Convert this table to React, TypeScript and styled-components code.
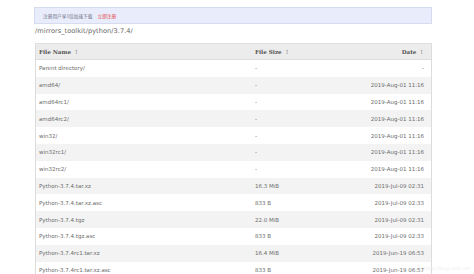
import React from "react";
import styled, { createGlobalStyle } from "styled-components";

const GlobalStyle = createGlobalStyle`
  html, body {
    margin: 0;
    padding: 0;
    background: #ffffff;
  }
  body {
    width: 474px;
    height: 274px;
    overflow: hidden;
    font-family: "DejaVu Sans", Verdana, sans-serif;
  }
`;

type Entry = {
  name: string;
  size: string;
  date: string;
};

const entries: Entry[] = [
  { name: "Parent directory/", size: "-", date: "-" },
  { name: "amd64/", size: "-", date: "2019-Aug-01 11:16" },
  { name: "amd64rc1/", size: "-", date: "2019-Aug-01 11:16" },
  { name: "amd64rc2/", size: "-", date: "2019-Aug-01 11:16" },
  { name: "win32/", size: "-", date: "2019-Aug-01 11:16" },
  { name: "win32rc1/", size: "-", date: "2019-Aug-01 11:16" },
  { name: "win32rc2/", size: "-", date: "2019-Aug-01 11:16" },
  { name: "Python-3.7.4.tar.xz", size: "16.3 MiB", date: "2019-Jul-09 02:31" },
  { name: "Python-3.7.4.tar.xz.asc", size: "833 B", date: "2019-Jul-09 02:33" },
  { name: "Python-3.7.4.tgz", size: "22.0 MiB", date: "2019-Jul-09 02:31" },
  { name: "Python-3.7.4.tgz.asc", size: "833 B", date: "2019-Jul-09 02:33" },
  { name: "Python-3.7.4rc1.tar.xz", size: "16.4 MiB", date: "2019-Jun-19 06:53" },
  { name: "Python-3.7.4rc1.tar.xz.asc", size: "833 B", date: "2019-Jun-19 06:57" },
];

const Page = styled.div`
  position: relative;
  width: 398px;
  padding: 7px 0 0 34px;
`;

const Notice = styled.div`
  height: 15px;
  display: flex;
  align-items: center;
  gap: 5px;
  padding-left: 8px;
  background: #e9ecfa;
  border: 1px solid #d7dbf0;
  font-family: "Noto Sans CJK SC", sans-serif;
  font-size: 4.7px;
  color: #6a6f86;
`;

const NoticeLink = styled.span`
  color: #e2413d;
`;

const Path = styled.div`
  height: 13px;
  margin-top: 1px;
  padding-left: 1px;
  font-size: 6.6px;
  line-height: 13px;
  color: #666;
  letter-spacing: 0.05px;
`;

const Listing = styled.div`
  margin-top: 5px;
  margin-left: 1px;
  border-left: 1px solid #dcdcdc;
  border-right: 1px solid #dcdcdc;
`;

const Columns = styled.div<{ $head?: boolean; $stripe?: boolean }>`
  display: grid;
  grid-template-columns: 216px 1fr 120px;
  align-items: center;
  height: ${(p) => (p.$head ? "15px" : "16.8px")};
  padding: 0 7px 0 3px;
  background: ${(p) => (p.$head ? "#ececec" : p.$stripe ? "#f3f3f3" : "#ffffff")};
  border-top: ${(p) => (p.$head ? "1px solid #e0e0e0" : "none")};
  border-bottom: ${(p) => (p.$head ? "1px solid #dedede" : "none")};
  font-size: 5.5px;
  color: #6c6c6c;
`;

const HeadCell = styled.span<{ $right?: boolean }>`
  font-family: "DejaVu Serif", "Liberation Serif", serif;
  font-weight: bold;
  font-size: 5.6px;
  color: #555;
  text-align: ${(p) => (p.$right ? "right" : "left")};
`;

const Arrow = styled.span`
  font-weight: normal;
  color: #888;
  margin-left: 3px;
`;

const Cell = styled.span<{ $right?: boolean }>`
  white-space: nowrap;
  text-align: ${(p) => (p.$right ? "right" : "left")};
`;

const Watermark = styled.div`
  position: absolute;
  right: 4px;
  bottom: 3px;
  font-size: 4.5px;
  color: #eeeeee;
`;

export default function App() {
  return (
    <>
      <GlobalStyle />
      <Page>
        <Notice>
          <span>注册用户享1倍加速下载</span>
          <NoticeLink>立即注册</NoticeLink>
        </Notice>
        <Path>/mirrors_toolkit/python/3.7.4/</Path>
        <Listing>
          <Columns $head>
            <HeadCell>
              File Name<Arrow>↕</Arrow>
            </HeadCell>
            <HeadCell>
              File Size<Arrow>↕</Arrow>
            </HeadCell>
            <HeadCell $right>
              Date<Arrow>↕</Arrow>
            </HeadCell>
          </Columns>
          {entries.map((e, i) => (
            <Columns key={e.name} $stripe={i % 2 === 1}>
              <Cell>{e.name}</Cell>
              <Cell>{e.size}</Cell>
              <Cell $right>{e.date}</Cell>
            </Columns>
          ))}
        </Listing>
      </Page>
      <Watermark>https://blog.csdn.net</Watermark>
    </>
  );
}
